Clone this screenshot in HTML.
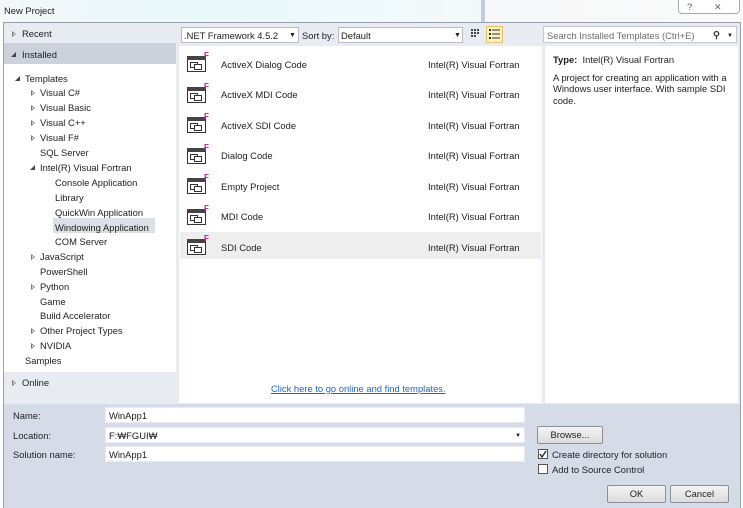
<!DOCTYPE html>
<html><head><meta charset="utf-8"><style>
*{margin:0;padding:0;box-sizing:border-box}
body{width:743px;height:508px;overflow:hidden;position:relative;font-family:"Liberation Sans","Noto Sans CJK KR",sans-serif;font-size:9.4px;color:#1e1e1e;background:#fff}
.a{position:absolute;white-space:nowrap;line-height:14px;margin-top:1.5px}
.tri{position:absolute;width:0;height:0;border-top:3.5px solid transparent;border-bottom:3.5px solid transparent;border-left:4px solid #777;margin-top:2px}
.tri.o::after{content:"";position:absolute;left:-3px;top:-1.5px;border-top:1.5px solid transparent;border-bottom:1.5px solid transparent;border-left:2px solid #fff}
.dn{position:absolute;width:0;height:0;border-left:5px solid transparent;border-bottom:5px solid #444;margin-top:2px}
.box{position:absolute;background:#fff;border:1px solid #c8ccd4}
.btn{position:absolute;border:1px solid #8a8f99;border-radius:2px;background:linear-gradient(#f4f4f4,#dcdcdc);text-align:center;line-height:16px}
</style></head><body>
<div style="position:absolute;left:0;top:0;width:743px;height:23px;background:linear-gradient(90deg,#f4f8fa 0%,#e8f8fb 25%,#f0fafc 50%,#f7f8f9 70%,#fafafa 100%)"></div>
<div style="position:absolute;left:481px;top:0;width:4px;height:22px;background:#c3cde0"></div>
<div class="a" style="left:4px;top:2px">New Project</div>
<div style="position:absolute;left:678px;top:-2px;width:62px;height:16px;border:1px solid #aaa;border-radius:0 0 4px 4px;background:#fff"></div>
<div class="a" style="left:687px;top:-2px;color:#555">?</div>
<div class="a" style="left:714px;top:-2px;color:#666;font-size:9px">✕</div>
<div style="position:absolute;left:3px;top:22px;width:738px;height:486px;background:#e8ebf2;border:1px solid #9aa0aa"></div>
<div style="position:absolute;left:4px;top:43px;width:172px;height:21px;background:#ccd1dc"></div>
<div style="position:absolute;left:4px;top:64px;width:172px;height:308px;background:#fff"></div>
<div class="tri o" style="left:12px;top:29px"></div><div class="a" style="left:22px;top:25px">Recent</div>
<div class="dn" style="left:11px;top:50px"></div><div class="a" style="left:22px;top:46px">Installed</div>
<div class="dn" style="left:15px;top:74px"></div><div class="a" style="left:25px;top:70px">Templates</div>
<div class="tri o" style="left:31px;top:88px"></div><div class="a" style="left:40px;top:84px">Visual C#</div>
<div class="tri o" style="left:31px;top:103px"></div><div class="a" style="left:40px;top:99px">Visual Basic</div>
<div class="tri o" style="left:31px;top:118px"></div><div class="a" style="left:40px;top:114px">Visual C++</div>
<div class="tri o" style="left:31px;top:133px"></div><div class="a" style="left:40px;top:129px">Visual F#</div>
<div class="a" style="left:40px;top:144px">SQL Server</div>
<div class="dn" style="left:30px;top:163px"></div><div class="a" style="left:40px;top:159px">Intel(R) Visual Fortran</div>
<div class="a" style="left:55px;top:174px">Console Application</div>
<div class="a" style="left:55px;top:189px">Library</div>
<div class="a" style="left:55px;top:204px">QuickWin Application</div>
<div style="position:absolute;left:53px;top:218px;width:102px;height:15px;background:#dcdfe6"></div>
<div class="a" style="left:55px;top:219px">Windowing Application</div>
<div class="a" style="left:55px;top:233px">COM Server</div>
<div class="tri o" style="left:31px;top:252px"></div><div class="a" style="left:40px;top:248px">JavaScript</div>
<div class="a" style="left:40px;top:263px">PowerShell</div>
<div class="tri o" style="left:31px;top:282px"></div><div class="a" style="left:40px;top:278px">Python</div>
<div class="a" style="left:40px;top:293px">Game</div>
<div class="a" style="left:40px;top:307px">Build Accelerator</div>
<div class="tri o" style="left:31px;top:326px"></div><div class="a" style="left:40px;top:322px">Other Project Types</div>
<div class="tri o" style="left:31px;top:341px"></div><div class="a" style="left:40px;top:337px">NVIDIA</div>
<div class="a" style="left:25px;top:352px">Samples</div>
<div class="tri o" style="left:12px;top:378px"></div><div class="a" style="left:22px;top:374px">Online</div>
<div class="box" style="left:181px;top:27px;width:118px;height:16px;border-color:#b8bcc6"></div>
<div class="a" style="left:184px;top:27px">.NET Framework 4.5.2</div>
<div class="a" style="left:289px;top:27px;font-size:7px">▼</div>
<div class="a" style="left:302px;top:27px">Sort by:</div>
<div class="box" style="left:338px;top:27px;width:125px;height:16px;border-color:#b8bcc6"></div>
<div class="a" style="left:341px;top:27px">Default</div>
<div class="a" style="left:454px;top:27px;font-size:7px">▼</div>
<svg style="position:absolute;left:470px;top:28px" width="12" height="12"><g fill="#444"><rect x="1" y="1" width="2" height="2"/><rect x="4" y="1" width="2" height="2"/><rect x="7" y="1" width="2" height="2"/><rect x="1" y="4" width="2" height="2"/><rect x="4" y="4" width="2" height="2"/><rect x="7" y="4" width="2" height="2"/><rect x="1" y="7" width="2" height="2"/><rect x="4" y="7" width="2" height="2"/></g></svg>
<div style="position:absolute;left:486px;top:26px;width:17px;height:17px;background:#fdf2c4;border:1px solid #e5c365"></div>
<svg style="position:absolute;left:488px;top:28px" width="13" height="13"><g fill="#333"><rect x="1" y="1" width="2" height="2"/><rect x="4" y="1.5" width="8" height="1"/><rect x="1" y="5" width="2" height="2"/><rect x="4" y="5.5" width="8" height="1"/><rect x="1" y="9" width="2" height="2"/><rect x="4" y="9.5" width="8" height="1"/></g></svg>
<div class="box" style="left:543px;top:26px;width:194px;height:17px;border-color:#c6cad2"></div>
<div class="a" style="left:547px;top:27px;color:#6d6d6d">Search Installed Templates (Ctrl+E)</div>
<div class="a" style="left:713px;top:26px;font-weight:bold;color:#333">⚲</div>
<div class="a" style="left:727px;top:27px;font-size:6px">▼</div>
<div style="position:absolute;left:179px;top:46px;width:363px;height:357px;background:#fff"></div>
<div style="position:absolute;left:180px;top:232px;width:361px;height:27px;background:#eeeeee"></div>
<div style="position:absolute;left:544px;top:46px;width:194px;height:357px;background:#fff;border-left:1px solid #e4e7ee"></div>
<div class="a" style="left:553px;top:51px"><b>Type:</b>&nbsp; Intel(R) Visual Fortran</div>
<div class="a" style="left:553px;top:70px;line-height:11.5px;white-space:normal;width:176px">A project for creating an application with a Windows user interface. With sample SDI code.</div>
<div id="rows"></div>
<div class="a" style="left:271px;top:380px;color:#1a66c8;text-decoration:underline">Click here to go online and find templates.</div>
<div style="position:absolute;left:4px;top:404px;width:736px;height:104px;background:#d6dbe8"></div>
<div class="a" style="left:13px;top:407px">Name:</div>
<div class="a" style="left:13px;top:427px">Location:</div>
<div class="a" style="left:13px;top:446px">Solution name:</div>
<div class="box" style="left:105px;top:407px;width:420px;height:16px;border-color:#e8ebf2"></div>
<div class="a" style="left:109px;top:407px">WinApp1</div>
<div class="box" style="left:105px;top:427px;width:420px;height:16px;border-color:#e8ebf2"></div>
<div class="a" style="left:109px;top:427px">F:₩FGUI₩</div>
<div class="a" style="left:515px;top:427px;font-size:6px">▼</div>
<div class="box" style="left:105px;top:446px;width:420px;height:16px;border-color:#e8ebf2"></div>
<div class="a" style="left:109px;top:446px">WinApp1</div>
<div class="btn" style="left:537px;top:426px;width:66px;height:18px">Browse...</div>
<div style="position:absolute;left:538px;top:449px;width:10px;height:10px;background:#fff;border:1px solid #555"></div>
<svg style="position:absolute;left:538px;top:449px" width="10" height="10"><path d="M2 5 L4 8 L8 2" fill="none" stroke="#222" stroke-width="1.3"/></svg>
<div class="a" style="left:552px;top:446px">Create directory for solution</div>
<div style="position:absolute;left:538px;top:464px;width:10px;height:10px;background:#fff;border:1px solid #555"></div>
<div class="a" style="left:552px;top:461px">Add to Source Control</div>
<div class="btn" style="left:607px;top:485px;width:59px;height:18px">OK</div>
<div class="btn" style="left:670px;top:485px;width:59px;height:18px">Cancel</div>
<script>
var n=["ActiveX Dialog Code","ActiveX MDI Code","ActiveX SDI Code","Dialog Code","Empty Project","MDI Code","SDI Code"],h="";
for(var i=0;i<7;i++){var c=63+i*30.5;
h+='<svg style="position:absolute;left:186px;top:'+(c-12)+'px" width="24" height="22"><rect x="1.5" y="5.5" width="18" height="15" fill="#fff" stroke="#333"/><rect x="1" y="5" width="19" height="4" fill="#444"/><rect x="4.5" y="11.5" width="7" height="5" fill="none" stroke="#333"/><rect x="8.5" y="13.5" width="7" height="5" fill="#fff" stroke="#333"/><text x="18" y="7" font-family="Liberation Sans" font-weight="bold" font-size="8" fill="#c0169c">F</text></svg>';
h+='<div class="a" style="left:221px;top:'+(c-7)+'px">'+n[i]+'</div><div class="a" style="left:428px;top:'+(c-7)+'px">Intel(R) Visual Fortran</div>';}
document.getElementById("rows").outerHTML=h;
</script>
</body></html>
